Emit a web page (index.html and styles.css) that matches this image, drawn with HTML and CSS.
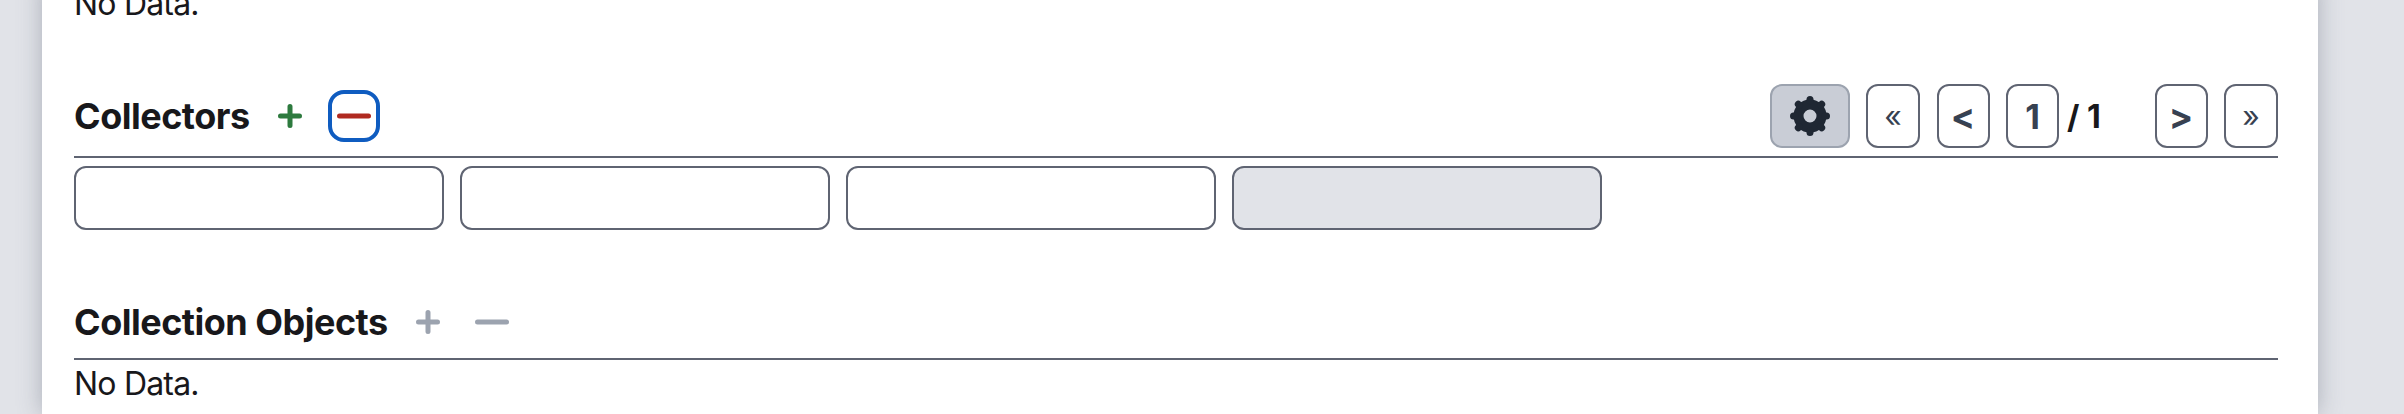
FILE: index.html
```html
<!DOCTYPE html>
<html lang="en">
<head>
    <meta charset="UTF-8">
    <title>Collecting Event</title>
    <link rel="stylesheet" href="styles.css">
</head>
<body>
    <div class="page">
        <p class="no-data">No Data.</p>

        <section class="collectors">
            <div class="section-header">
                <div class="section-title">
                    <h3>Collectors</h3>
                    <button class="icon-btn">
                        <svg width="24" height="24" viewBox="0 0 24 24" class="add"><path d="M12 2.5v19M2.5 12h19"/></svg>
                    </button>
                    <button class="icon-btn focused">
                        <svg width="34" height="6" viewBox="0 0 34 6" class="remove"><path d="M2.5 3h29"/></svg>
                    </button>
                </div>
                <div class="pager">
                    <button class="settings-btn">
                        <svg width="40" height="40" viewBox="0 0 40 40">
                            <circle cx="20" cy="20" r="11.5" fill="none" stroke="currentColor" stroke-width="10"/>
                            <path fill="none" stroke="currentColor" stroke-width="7" stroke-linecap="round" d="M20 3.5V5M20 35v1.5M3.5 20H5M35 20h1.5M8.3 8.3l1.1 1.1M30.6 30.6l1.1 1.1M31.7 8.3l-1.1 1.1M9.4 30.6l-1.1 1.1"/>
                        </svg>
                    </button>
                    <button class="page-btn small">«</button>
                    <button class="page-btn">&lt;</button>
                    <div class="page-count">
                        <span class="page-input">1</span>
                        <span class="page-total">/ 1</span>
                    </div>
                    <button class="page-btn">&gt;</button>
                    <button class="page-btn small">»</button>
                </div>
            </div>
            <div class="fields">
                <div class="field"></div>
                <div class="field"></div>
                <div class="field"></div>
                <div class="field disabled"></div>
            </div>
        </section>

        <section class="objects">
            <div class="section-header">
                <div class="section-title">
                    <h3>Collection Objects</h3>
                    <button class="icon-btn">
                        <svg width="24" height="24" viewBox="0 0 24 24" class="muted"><path d="M12 2.5v19M2.5 12h19"/></svg>
                    </button>
                    <button class="icon-btn">
                        <svg width="34" height="6" viewBox="0 0 34 6" class="muted"><path d="M2.5 3h29"/></svg>
                    </button>
                </div>
            </div>
            <p class="no-data">No Data.</p>
        </section>
    </div>
</body>
</html>
```

FILE: styles.css
```css
* {
    margin: 0;
    padding: 0;
    box-sizing: border-box;
}

html, body {
    height: 414px;
    overflow: hidden;
}

body {
    font-family: Inter, "Liberation Sans", sans-serif;
    background: #e1e3e8;
    color: #18181b;
}

.page {
    margin: -20px 86px 0 42px;
    height: 434px;
    padding: 0 40px 0 32px;
    background: #fff;
    box-shadow: 0 0 22px rgba(107, 114, 128, 0.45);
}

.no-data {
    font-size: 32px;
    line-height: 48px;
    letter-spacing: -0.8px;
}

.collectors {
    margin-top: 56px;
}

.objects {
    margin-top: 56px;
}

.section-header {
    display: flex;
    justify-content: space-between;
    align-items: center;
    height: 74px;
    border-bottom: 2px solid #5f6472;
}

.collectors .section-header {
    padding-bottom: 8px;
}

.section-title {
    display: flex;
    align-items: center;
}

h3 {
    font-size: 36px;
    font-weight: 700;
    letter-spacing: -0.5px;
    color: #18181b;
    margin-right: 2px;
}

.icon-btn {
    display: flex;
    align-items: center;
    justify-content: center;
    width: 52px;
    height: 52px;
    margin-left: 12px;
    background: none;
    border: 4px solid transparent;
    border-radius: 16px;
}

.icon-btn svg {
    fill: none;
    stroke-width: 5px;
    stroke-linecap: round;
}

.add { stroke: #2d7a3e; }
.remove { stroke: #b02a20; }
.muted { stroke: #9ca3af; }

.icon-btn.focused {
    border-color: #0f5cc0;
}

.pager {
    display: flex;
    align-items: center;
    gap: 16.5px;
}

.settings-btn {
    display: flex;
    align-items: center;
    justify-content: center;
    width: 80px;
    height: 64px;
    background: #c9cdd6;
    border: 2px solid #9ca3af;
    border-radius: 12px;
    color: #1f2733;
}

.page-btn, .page-input {
    display: flex;
    align-items: center;
    justify-content: center;
    width: 53px;
    height: 64px;
    background: #fff;
    border: 2px solid #5f6472;
    border-radius: 12px;
    font-family: inherit;
    font-size: 36px;
    font-weight: 700;
    color: #374151;
}

.page-input {
    font-size: 34px;
}

.page-btn.small {
    width: 54px;
    font-weight: 400;
    font-size: 30px;
}

.page-count {
    display: flex;
    align-items: center;
    width: 132px;
    gap: 8px;
}

.page-total {
    font-size: 32px;
    font-weight: 700;
    color: #18181b;
}

.fields {
    display: flex;
    gap: 16px;
    margin-top: 8px;
}

.field {
    width: 370px;
    height: 64px;
    background: #fff;
    border: 2px solid #5f6472;
    border-radius: 12px;
}

.field.disabled {
    background: #e1e3e8;
}
```
